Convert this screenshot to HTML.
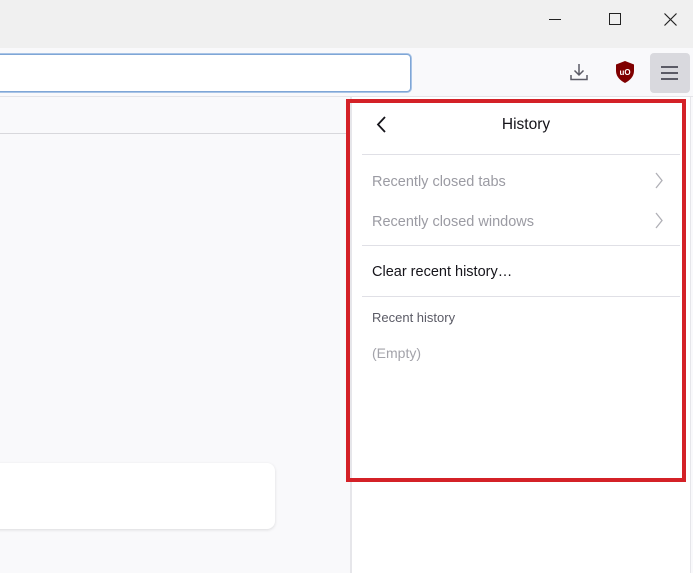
<!DOCTYPE html>
<html><head><style>
*{margin:0;padding:0;box-sizing:border-box}
body{width:693px;height:573px;overflow:hidden;background:#f9f9fb;font-family:"Liberation Sans",sans-serif;position:relative}
.abs{position:absolute}
</style></head><body>
<div class="abs" style="left:0;top:0;width:693px;height:48px;background:#f0f0f0"></div>
<div class="abs" style="left:549px;top:19px;width:12px;height:1px;background:#222"></div>
<div class="abs" style="left:609px;top:13px;width:12px;height:12px;border:1px solid #222"></div>
<svg class="abs" style="left:664px;top:13px" width="13" height="13"><path d="M0.5 0.5L12.5 12.5M12.5 0.5L0.5 12.5" stroke="#222" stroke-width="1.2"/></svg>
<div class="abs" style="left:0;top:48px;width:693px;height:48px;background:#f9f9fb"></div>
<div class="abs" style="left:-6px;top:54px;width:417px;height:38px;background:#fff;border:1px solid #7fa6d6;border-radius:4px;box-shadow:0 0 0 1px #a9c4e6"></div>
<svg class="abs" style="left:569px;top:62px" width="20" height="20" fill="none" stroke="#5b5b66" stroke-width="1.5"><path d="M10 2V13M5.5 8.5L10 13L14.5 8.5M2 13V17.5H18V13"/></svg>
<svg class="abs" style="left:614px;top:60px" width="22" height="24"><path d="M11 1L20 4.5V11C20 17 15 21 11 23C7 21 2 17 2 11V4.5Z" fill="#800000"/><text x="11" y="15" font-size="8" fill="#fff" text-anchor="middle" font-family="Liberation Sans" font-weight="bold">uO</text></svg>
<div class="abs" style="left:650px;top:53px;width:40px;height:40px;background:#d9d9de;border-radius:4px"></div>
<div class="abs" style="left:661px;top:66px;width:17px;height:1.5px;background:#5b5b66"></div>
<div class="abs" style="left:661px;top:72px;width:17px;height:1.5px;background:#5b5b66"></div>
<div class="abs" style="left:661px;top:78px;width:17px;height:1.5px;background:#5b5b66"></div>
<div class="abs" style="left:0;top:96px;width:693px;height:1px;background:#e4e4e8"></div>
<div class="abs" style="left:0;top:133px;width:346px;height:1px;background:#d8d8dc"></div>
<div class="abs" style="left:-10px;top:463px;width:285px;height:66px;background:#fff;border-radius:8px;box-shadow:0 1px 3px rgba(0,0,0,.12)"></div>
<div class="abs" style="left:350px;top:97px;width:341px;height:476px;background:#fff;border-left:2px solid #e6e6ea;border-right:1px solid #e6e6ea"></div>
<div class="abs" style="left:346px;top:99px;width:340px;height:383px;border:4px solid #d42127"></div>
<svg class="abs" style="left:376px;top:116px" width="12" height="18" fill="none" stroke="#15141a" stroke-width="1.8"><path d="M9 1L2 8.5L9 16"/></svg>
<div class="abs" style="left:350px;top:116px;width:352px;text-align:center;font-size:15.5px;color:#15141a">History</div>
<div class="abs" style="left:362px;top:154px;width:318px;height:1px;background:#e0e0e6"></div>
<div class="abs" style="left:372px;top:174px;font-size:14.5px;color:#9b9ba3">Recently closed tabs</div>
<div class="abs" style="left:372px;top:214px;font-size:14.5px;color:#9b9ba3">Recently closed windows</div>
<svg class="abs" style="left:654px;top:172px" width="10" height="18" fill="none" stroke="#b0b0b6" stroke-width="1.3"><path d="M2 1L8 8.5L2 16"/></svg>
<svg class="abs" style="left:654px;top:212px" width="10" height="18" fill="none" stroke="#b0b0b6" stroke-width="1.3"><path d="M2 1L8 8.5L2 16"/></svg>
<div class="abs" style="left:362px;top:245px;width:318px;height:1px;background:#e0e0e6"></div>
<div class="abs" style="left:372px;top:264px;font-size:14.5px;color:#15141a">Clear recent history…</div>
<div class="abs" style="left:362px;top:296px;width:318px;height:1px;background:#e0e0e6"></div>
<div class="abs" style="left:372px;top:310px;font-size:13px;color:#5b5b66">Recent history</div>
<div class="abs" style="left:372px;top:345px;font-size:14px;color:#a3a3aa">(Empty)</div>
</body></html>
